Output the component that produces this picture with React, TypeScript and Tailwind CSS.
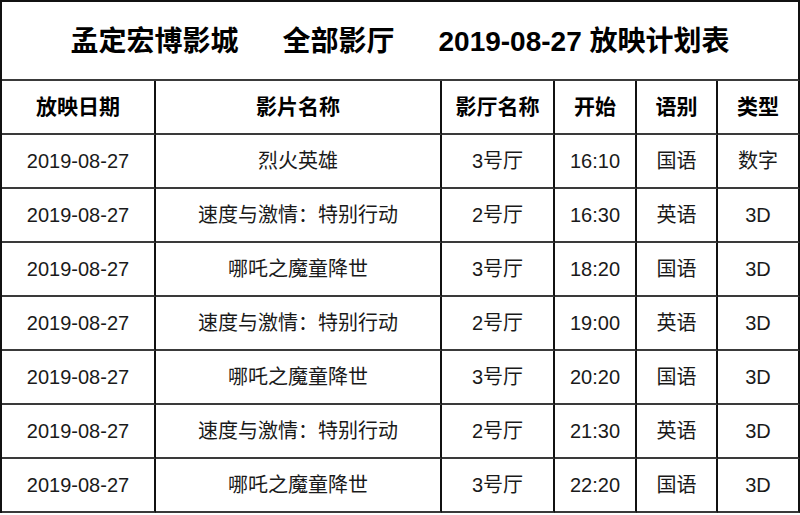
import React from "react";

const cols = "grid grid-cols-[154px_286px_113px_82px_81px_82px]";

const rows: string[][] = [
  ["2019-08-27", "烈火英雄", "3号厅", "16:10", "国语", "数字"],
  ["2019-08-27", "速度与激情：特别行动", "2号厅", "16:30", "英语", "3D"],
  ["2019-08-27", "哪吒之魔童降世", "3号厅", "18:20", "国语", "3D"],
  ["2019-08-27", "速度与激情：特别行动", "2号厅", "19:00", "英语", "3D"],
  ["2019-08-27", "哪吒之魔童降世", "3号厅", "20:20", "国语", "3D"],
  ["2019-08-27", "速度与激情：特别行动", "2号厅", "21:30", "英语", "3D"],
  ["2019-08-27", "哪吒之魔童降世", "3号厅", "22:20", "国语", "3D"],
];

const headers = ["放映日期", "影片名称", "影厅名称", "开始", "语别", "类型"];

export default function App() {
  return (
    <div
      className="w-[800px] h-[515px] bg-white text-[#111]"
      style={{ fontFamily: '"Liberation Sans", "Noto Sans CJK SC", sans-serif' }}
    >
      <div className="w-[800px] border-l-2 border-t-2 border-[#111]">
        <div className="h-[79px] border-b-2 border-r-2 border-b-[#3a3a3a] border-r-[#111] flex items-center justify-center gap-[44px] text-[28px] font-bold text-black pt-[2px]">
          <span>孟定宏博影城</span>
          <span>全部影厅</span>
          <span>2019-08-27 放映计划表</span>
        </div>
        <div className={cols + " h-[54px]"}>
          {headers.map((h, i) => (
            <div
              key={i}
              className="border-r-2 border-b-2 border-r-[#111] border-b-[#3a3a3a] flex items-center justify-center text-[21px] font-bold text-black"
            >
              {h}
            </div>
          ))}
        </div>
        {rows.map((r, ri) => (
          <div key={ri} className={cols + " h-[54px]"}>
            {r.map((c, ci) => (
              <div
                key={ci}
                className="border-r-2 border-b-2 border-r-[#111] border-b-[#3a3a3a] flex items-center justify-center text-[20px] text-[#1a1a1a]"
              >
                {c}
              </div>
            ))}
          </div>
        ))}
      </div>
    </div>
  );
}
